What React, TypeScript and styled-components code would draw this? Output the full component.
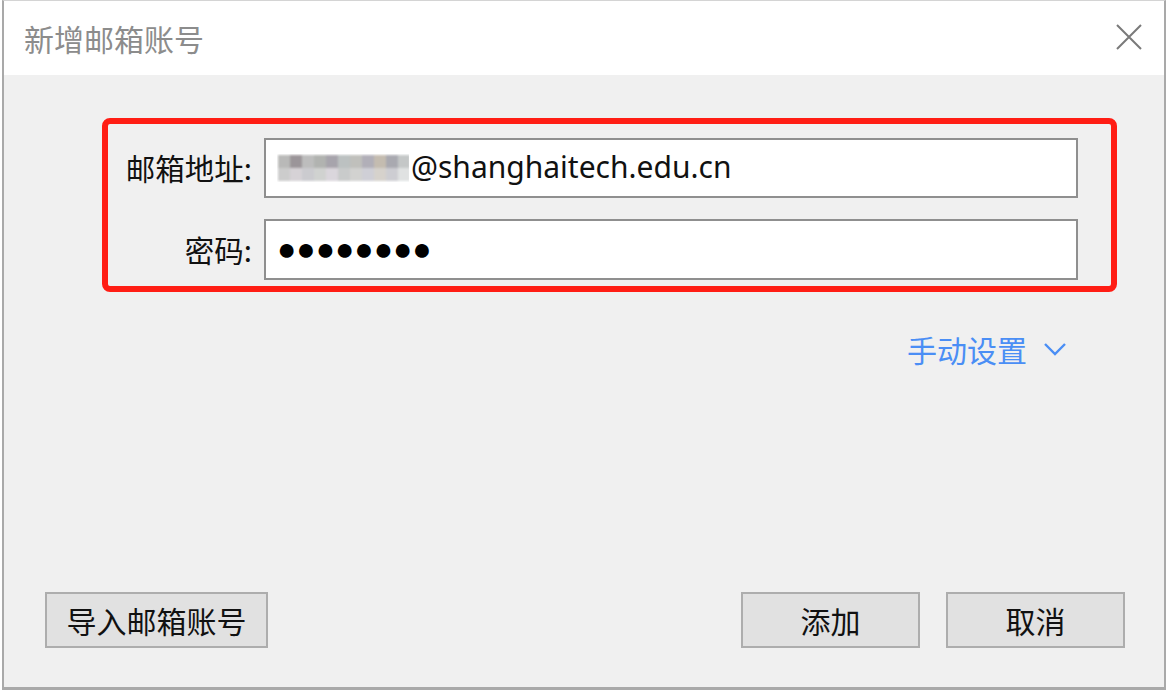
import React from "react";
import styled, { createGlobalStyle } from "styled-components";

const GlobalStyle = createGlobalStyle`
  html, body { margin: 0; padding: 0; background: #ffffff; }
  body { font-family: "Noto Sans", "Noto Sans CJK SC", sans-serif; }
  * { box-sizing: border-box; }
`;

const Window = styled.div`
  width: 1164px;
  height: 690px;
  margin-left: 2px;
  display: flex;
  flex-direction: column;
  border-top: 1px solid #d4d4d4;
  border-left: 2px solid #a9a9a9;
  border-right: 2px solid #a9a9a9;
  border-bottom: 3px solid #a9a9a9;
  background: #f0f0f0;
`;

const TitleBar = styled.div`
  height: 74px;
  flex: none;
  background: #ffffff;
  display: flex;
  align-items: center;
  justify-content: space-between;
  padding: 0 22px 0 20px;
`;

const Title = styled.div`
  font-family: "Noto Sans CJK SC", sans-serif;
  font-size: 30px;
  color: #8c8c8c;
  line-height: 1;
  margin-top: -1px;
`;

const CloseButton = styled.button`
  border: 0;
  background: transparent;
  padding: 0;
  width: 26px;
  height: 26px;
  display: flex;
  margin-top: -2px;
  cursor: pointer;
`;

const Body = styled.div`
  flex: 1;
  display: flex;
  flex-direction: column;
  padding: 43px 0 39px 0;
`;

const CredBox = styled.div`
  margin-left: 98px;
  width: 1015px;
  height: 174px;
  border: 6px solid #ff1d14;
  border-radius: 8px;
  display: grid;
  grid-template-columns: 1fr 814px;
  column-gap: 12px;
  row-gap: 21px;
  align-content: start;
  padding: 14px 33px 0 0;
`;

const Label = styled.label`
  font-family: "Noto Sans CJK SC", sans-serif;
  font-size: 29.5px;
  color: #111111;
  text-align: right;
  align-self: center;
  line-height: 1;
`;

const Field = styled.div<{ $h: number }>`
  height: ${(p) => p.$h}px;
  background: #ffffff;
  border: 2px solid #8f8f8f;
  display: flex;
  align-items: center;
  padding-left: ${(p) => (p.$h === 60 ? 11 : 12)}px;
  overflow: hidden;
`;

const EmailText = styled.span`
  font-family: "Noto Sans", sans-serif;
  font-size: 30px;
  color: #111111;
  margin-left: 2px;
  line-height: 1;
  margin-top: -2px;
`;

const Dots = styled.span`
  font-family: "Liberation Sans", sans-serif;
  font-size: 32px;
  letter-spacing: 0px;
  color: #000000;
  line-height: 1;
  margin-left: -1px;
  margin-top: -2px;
`;

const LinkRow = styled.div`
  display: flex;
  justify-content: flex-end;
  padding-right: 97px;
  margin-top: 37px;
`;

const ManualLink = styled.a`
  display: flex;
  align-items: center;
  gap: 16px;
  font-family: "Noto Sans CJK SC", sans-serif;
  font-size: 30px;
  color: #4a8ef5;
  text-decoration: none;
  cursor: pointer;
  line-height: 40px;
`;

const Footer = styled.div`
  margin-top: auto;
  display: flex;
  align-items: center;
  padding: 0 39px 0 41px;
  gap: 26px;
`;

const Spacer = styled.div`
  flex: 1;
`;

const Button = styled.button<{ $w: number }>`
  width: ${(p) => p.$w}px;
  height: 56px;
  background: #e1e1e1;
  border: 2px solid #adadad;
  font-family: "Noto Sans CJK SC", sans-serif;
  font-size: 30px;
  color: #111111;
  padding: 0;
  line-height: 1;
  cursor: pointer;
`;

const mosaicTop = ["#b9b9b8", "#9b9599", "#bdbdbd", "#b1b3b0", "#a7a4ac", "#bcc1c1", "#c0c0bc", "#b1afb8", "#c4bcb0", "#a9a9b0", "#c4c7c7"];
const mosaicBottom = ["#cccccc", "#d6d2d6", "#cbcbcf", "#d0d2d0", "#dad6dc", "#c9cbcb", "#d2d2d0", "#cfcfd6", "#d6d2cc", "#cdcdd2", "#e0e2e2"];

function Mosaic() {
  return (
    <svg width="132" height="28" viewBox="0 0 132 28" style={{ flex: "none" }}>
      <defs>
        <filter id="mb" x="-5%" y="-10%" width="110%" height="120%">
          <feGaussianBlur stdDeviation="0.8" />
        </filter>
      </defs>
      <g filter="url(#mb)">
        {mosaicTop.map((c, i) => (
          <rect key={"t" + i} x={1 + i * 12} y={1} width={12} height={13} fill={c} />
        ))}
        {mosaicBottom.map((c, i) => (
          <rect key={"b" + i} x={1 + i * 12} y={14} width={12} height={13} fill={c} />
        ))}
      </g>
    </svg>
  );
}

export default function App() {
  return (
    <>
      <GlobalStyle />
      <Window>
        <TitleBar>
          <Title>新增邮箱账号</Title>
          <CloseButton aria-label="关闭">
            <svg width="26" height="26" viewBox="0 0 26 26">
              <path d="M1 1 L25 25 M25 1 L1 25" stroke="#7a7a7a" strokeWidth="2" fill="none" />
            </svg>
          </CloseButton>
        </TitleBar>
        <Body>
          <CredBox>
            <Label>邮箱地址:</Label>
            <Field $h={60}>
              <Mosaic />
              <EmailText>@shanghaitech.edu.cn</EmailText>
            </Field>
            <Label>密码:</Label>
            <Field $h={61}>
              <Dots>●●●●●●●●</Dots>
            </Field>
          </CredBox>
          <LinkRow>
            <ManualLink>
              手动设置
              <svg width="24" height="14" viewBox="0 0 24 14">
                <path d="M2 2 L12 12 L22 2" stroke="#4a8ef5" strokeWidth="2.4" fill="none" />
              </svg>
            </ManualLink>
          </LinkRow>
          <Footer>
            <Button $w={223}>导入邮箱账号</Button>
            <Spacer />
            <Button $w={179}>添加</Button>
            <Button $w={179}>取消</Button>
          </Footer>
        </Body>
      </Window>
    </>
  );
}
